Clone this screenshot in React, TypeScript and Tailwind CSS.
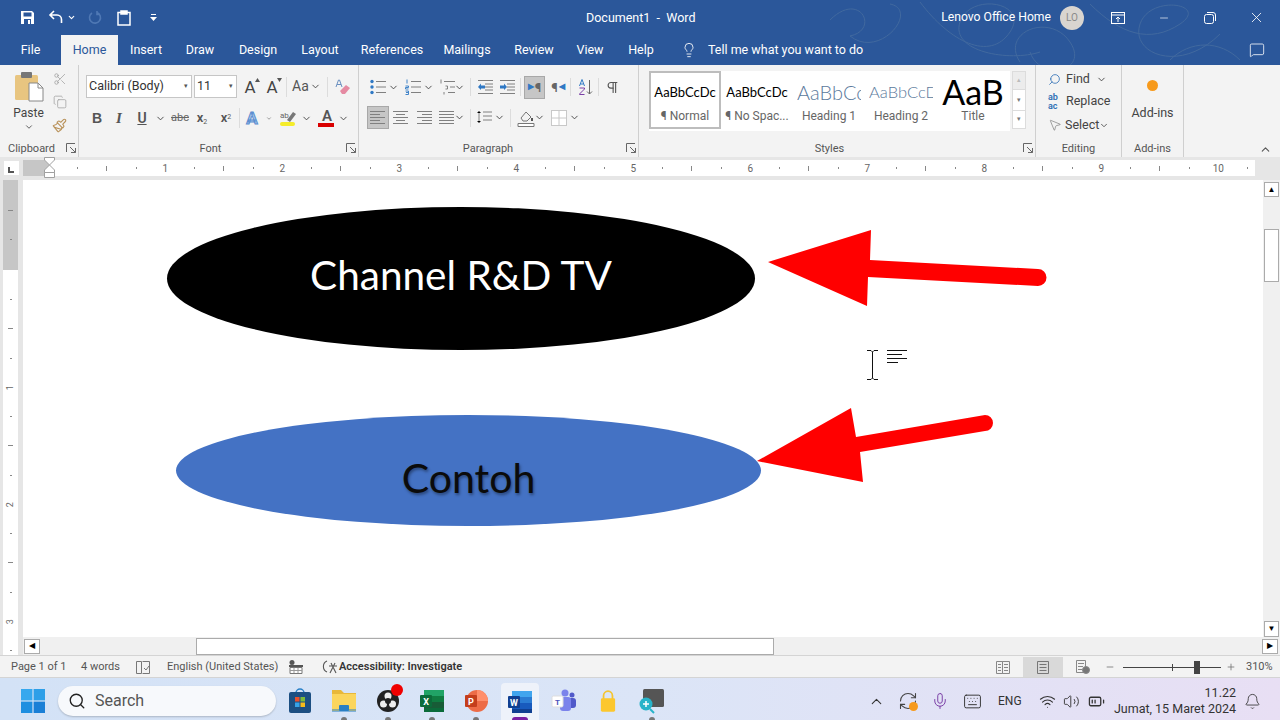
import {
  BatteryMedium,
  Bell,
  ChevronDown,
  ChevronUp,
  Copy,
  Keyboard,
  Lightbulb,
  Mic,
  MessageSquare,
  Minus,
  MousePointer2,
  Paintbrush,
  Pilcrow,
  Plus,
  RefreshCw,
  Scissors,
  Search,
  Volume2,
  Wifi,
  X,
} from "lucide-react";

const uiFont = "font-['Roboto',sans-serif]";

const tabs = [
  { label: "File", w: "w-[61px]" },
  { label: "Home", w: "w-[57px]", active: true },
  { label: "Insert", w: "w-[56px]" },
  { label: "Draw", w: "w-[52px]" },
  { label: "Design", w: "w-[64px]" },
  { label: "Layout", w: "w-[60px]" },
  { label: "References", w: "w-[84px]" },
  { label: "Mailings", w: "w-[66px]" },
  { label: "Review", w: "w-[68px]" },
  { label: "View", w: "w-[44px]" },
  { label: "Help", w: "w-[58px]" },
];

const styleCards = [
  { sample: "AaBbCcDc", label: "¶ Normal", cls: "text-[13px] text-black", active: true },
  { sample: "AaBbCcDc", label: "¶ No Spac...", cls: "text-[13px] text-black" },
  { sample: "AaBbCc", label: "Heading 1", cls: "text-[20px] font-light text-[#5b7a9c]" },
  { sample: "AaBbCcD", label: "Heading 2", cls: "text-[16.500px] font-light text-[#5b7a9c]" },
  { sample: "AaB", label: "Title", cls: "text-[34px] leading-[26px] text-black" },
];

const rulerMarks = ["·", "|", "·", "1", "·", "|", "·", "2", "·", "|", "·", "3", "·", "|", "·", "4", "·", "|", "·", "5", "·", "|", "·", "6", "·", "|", "·", "7", "·", "|", "·", "8", "·", "|", "·", "9", "·", "|", "·", "10", "·", "|"];
const sideMarks = ["·", "|", "·", "1", "·", "|", "·", "2", "·", "|", "·", "3", "·"];

const alignLeft = ["M0 2.500h15", "M0 5.500h10", "M0 8.500h15", "M0 11.500h10", "M0 14.500h15"];
const alignCenter = ["M0 2.500h15", "M3 5.500h9", "M0 8.500h15", "M3 11.500h9", "M0 14.500h15"];
const alignRight = ["M0 2.500h15", "M5 5.500h10", "M0 8.500h15", "M5 11.500h10", "M0 14.500h15"];
const alignJustify = ["M0 2.500h15", "M0 5.500h15", "M0 8.500h15", "M0 11.500h15", "M0 14.500h15"];

function Chev({ className = "w-[14px]" }: { className?: string }) {
  return (
    <span className={`flex items-center justify-center ${className}`}>
      <ChevronDown size={11} strokeWidth={2} className="text-[#444]" />
    </span>
  );
}

function Launcher() {
  return (
    <svg width="10" height="10" viewBox="0 0 10 10" fill="none" stroke="#666" strokeWidth="1">
      <path d="M.5 9V.5H9M9.5 9.5 4 4M9.5 5v4.500H5" />
    </svg>
  );
}

function Sep({ className = "h-[20px]" }: { className?: string }) {
  return <span className={`w-px bg-[#dcdcdc] ${className}`} />;
}

function GroupLabel({ text, launcher, className = "justify-center" }: { text: string; launcher?: boolean; className?: string }) {
  return (
    <div className={`relative mt-auto flex h-[16px] items-center text-[11px] text-[#555] ${className}`}>
      {text}
      {launcher && (
        <span className="absolute -right-[1px] top-[2px]">
          <Launcher />
        </span>
      )}
    </div>
  );
}

function PasteIcon() {
  return (
    <svg width="30" height="32" viewBox="0 0 30 32">
      <rect x="1" y="4" width="23" height="25" rx="1.500" fill="#e8c580" />
      <rect x="7" y="1" width="11" height="6" rx="1" fill="#777" />
      <path d="M15 12h9l5 5v13H15z" fill="#fff" stroke="#888" />
      <path d="M24 12v5h5" fill="none" stroke="#888" />
    </svg>
  );
}

function GrowA({ up }: { up?: boolean }) {
  return (
    <span className="relative flex w-[22px] justify-center text-[17px] leading-[20px] text-[#444]">
      A
      <svg width="5" height="4" viewBox="0 0 5 4" className="absolute right-[1px] top-[1px]">
        <path d={up ? "M0 4 2.500 0 5 4z" : "M0 0h5L2.500 4z"} fill="#555" />
      </svg>
    </span>
  );
}

function Eraser() {
  return (
    <svg width="16" height="16" viewBox="0 0 16 16">
      <path d="M1 8 3.500 1h1L7 8M2 5.500h4" fill="none" stroke="#6a8fc0" />
      <path d="m5 12 6-6 4 3-5 6H7z" fill="#e58aa2" />
    </svg>
  );
}

function Lines({ rows }: { rows: string[] }) {
  return (
    <svg width="16" height="17" viewBox="0 0 16 17" stroke="#808080" strokeWidth="1">
      {rows.map((d) => (
        <path key={d} d={d} />
      ))}
    </svg>
  );
}

function Bullets() {
  return (
    <svg width="16" height="16" viewBox="0 0 16 16">
      <circle cx="2" cy="2.500" r="1.700" fill="#2f78c4" />
      <circle cx="2" cy="8" r="1.700" fill="#2f78c4" />
      <circle cx="2" cy="13.500" r="1.700" fill="#2f78c4" />
      <path d="M6 2.500h10M6 8h10M6 13.500h10" stroke="#808080" />
    </svg>
  );
}

function Numbered() {
  return (
    <svg width="16" height="16" viewBox="0 0 16 16">
      <path d="M2 0.500v4M.500 7h3v1.500h-3v1.500h3M.500 12h3v3.500h-3M1 13.500h2" fill="none" stroke="#2f78c4" strokeWidth=".9" />
      <path d="M6 2.500h10M6 8h10M6 13.500h10" stroke="#808080" />
    </svg>
  );
}

function Multilevel() {
  return (
    <svg width="16" height="16" viewBox="0 0 16 16">
      <path d="M2 .500v4M6.500 7h2v3h-2M5 13v2.500" fill="none" stroke="#777" strokeWidth=".9" />
      <path d="M5 2.500h11M11 8h5M9 13.500h7" stroke="#808080" />
    </svg>
  );
}

function SortIcon() {
  return (
    <svg width="14" height="16" viewBox="0 0 14 16" fill="none">
      <path d="M.500 7 3 .500 5.500 7M1.500 5h3" stroke="#2f78c4" />
      <path d="M.500 9h5v1L.500 15v.500h5" stroke="#7a3fa6" />
      <path d="M10.500 1v14M8 12.500l2.500 2.500 2.500-2.500" stroke="#666" />
    </svg>
  );
}

function IndentIcon({ flip }: { flip?: boolean }) {
  return (
    <svg width="16" height="16" viewBox="0 0 16 16" fill="none">
      <path d="M1 1.500h15M8 5h8M8 8h8M8 11h8M1 14.500h15" stroke="#808080" />
      {flip ? <path d="M1 6.500h4V4.500l3 3.500-3 3V9.500H1z" fill="#2f78c4" /> : <path d="M8 6.500H4V4.500L1 8l3 3V9.500h4z" fill="#2f78c4" />}
    </svg>
  );
}

function DirIcon({ rtl }: { rtl?: boolean }) {
  return (
    <span className="flex items-center text-[13px] font-bold leading-none text-[#666]">
      {rtl ? (
        <>
          ¶<span className="ml-[1px] text-[8px] text-[#2f78c4]">◀</span>
        </>
      ) : (
        <>
          <span className="mr-[1px] text-[8px] text-[#2f78c4]">▶</span>¶
        </>
      )}
    </span>
  );
}

function WinLogo() {
  return (
    <svg width="24" height="24" viewBox="0 0 24 24">
      <rect x="0" y="0" width="11.400" height="11.400" fill="#36a8ee" />
      <rect x="12.600" y="0" width="11.400" height="11.400" fill="#2d9fe8" />
      <rect x="0" y="12.600" width="11.400" height="11.400" fill="#1f8fe0" />
      <rect x="12.600" y="12.600" width="11.400" height="11.400" fill="#1a7fd6" />
    </svg>
  );
}

function StoreIcon() {
  return (
    <svg width="24" height="26" viewBox="0 0 24 26">
      <path d="M8 5a4 4 0 0 1 8 0" fill="none" stroke="#2a80c8" strokeWidth="1.500" />
      <rect x="1" y="4" width="22" height="21" rx="2" fill="#1c4f82" />
      <rect x="7" y="9" width="4.500" height="4.500" fill="#e8502d" />
      <rect x="12.500" y="9" width="4.500" height="4.500" fill="#7dba3a" />
      <rect x="7" y="14.500" width="4.500" height="4.500" fill="#36a3e8" />
      <rect x="12.500" y="14.500" width="4.500" height="4.500" fill="#f5bb1a" />
    </svg>
  );
}

function FolderIcon() {
  return (
    <svg width="26" height="26" viewBox="0 0 26 26">
      <path d="M1 2h9l3 3h12v18H1z" fill="#e8b83a" />
      <rect x="1" y="6" width="24" height="17" fill="#fbd55c" />
      <rect x="8" y="17" width="10" height="6" rx="1" fill="#2a7fc4" />
      <rect x="1" y="21" width="24" height="3" fill="#2a7fc4" opacity=".5" />
    </svg>
  );
}

function ObsIcon() {
  return (
    <span className="relative flex">
      <svg width="24" height="24" viewBox="0 0 24 24">
        <circle cx="12" cy="12" r="11" fill="#222" />
        <circle cx="12" cy="7" r="3.500" fill="#eee" />
        <circle cx="7.500" cy="15" r="3.500" fill="#eee" />
        <circle cx="16.500" cy="15" r="3.500" fill="#eee" />
        <circle cx="12" cy="12" r="3" fill="#222" />
      </svg>
      <span className="absolute -right-[3px] -top-[5px] h-[12px] w-[12px] rounded-full bg-[#f00000]" />
    </span>
  );
}

function OfficeIcon({ kind }: { kind: "x" | "p" | "w" }) {
  if (kind === "p") {
    return (
      <svg width="24" height="24" viewBox="0 0 24 24">
        <circle cx="13" cy="12" r="11" fill="#ed6c47" />
        <path d="M13 1a11 11 0 0 1 11 11H13z" fill="#ff8f6b" />
        <rect x="1" y="6" width="12" height="12" rx="1" fill="#c43e1c" />
        <text x="7" y="15.500" fontSize="9" fontWeight="700" textAnchor="middle" fill="#fff">P</text>
      </svg>
    );
  }
  const colors = kind === "x" ? ["#21a366", "#107c41", "#185c37", "#0b6b3a"] : ["#41a5ee", "#2b7cd3", "#185abd", "#103f91"];
  return (
    <svg width="24" height="24" viewBox="0 0 24 24">
      <rect x="4" y="1" width="20" height="6" fill={colors[0]} />
      <rect x="4" y="7" width="20" height="6" fill={colors[1]} />
      <rect x="4" y="13" width="20" height="6" fill={colors[2]} />
      <rect x="4" y="19" width="20" height="4" fill={colors[3]} />
      <rect x="0" y="6" width="12" height="12" rx="1" fill={colors[3]} />
      <text x="6" y="15.500" fontSize="9" fontWeight="700" textAnchor="middle" fill="#fff">{kind === "x" ? "X" : "W"}</text>
    </svg>
  );
}

function TeamsIcon() {
  return (
    <svg width="26" height="24" viewBox="0 0 26 24">
      <circle cx="14" cy="4" r="3.500" fill="#7b83eb" />
      <circle cx="21" cy="6" r="2.500" fill="#5059c9" />
      <rect x="17" y="9" width="8" height="10" rx="3" fill="#5059c9" />
      <rect x="9" y="8" width="11" height="14" rx="3" fill="#7b83eb" />
      <rect x="1" y="7" width="11" height="11" rx="1.500" fill="#fff" stroke="#ddd" />
      <text x="6.500" y="15.500" fontSize="8" fontWeight="700" textAnchor="middle" fill="#4b53bc">T</text>
    </svg>
  );
}

function LockIcon() {
  return (
    <svg width="16" height="26" viewBox="0 0 18 26">
      <path d="M4 11V7a5 5 0 0 1 10 0v4" fill="none" stroke="#f4c430" strokeWidth="2" />
      <rect x="1" y="10" width="16" height="15" rx="1.500" fill="#fcc72e" />
    </svg>
  );
}

function MagnifierIcon() {
  return (
    <svg width="26" height="26" viewBox="0 0 26 26">
      <rect x="4" y="1" width="21" height="18" rx="1.500" fill="#555" />
      <circle cx="7" cy="16" r="6.500" fill="#27b3c9" />
      <path d="M7 13v6M4 16h6" stroke="#fff" strokeWidth="1.500" />
      <path d="m11 21 4 4" stroke="#27b3c9" strokeWidth="2" />
    </svg>
  );
}

export default function App() {
  return (
    <div className={`flex h-[720px] w-[1280px] flex-col overflow-hidden bg-white ${uiFont}`}>
      {/* title bar + tabs */}
      <div className="relative h-[65px] shrink-0 bg-[#2b579a] text-white">
        <svg className="absolute left-[820px] top-0" width="440" height="65" viewBox="0 0 440 65" fill="none" stroke="#41699f" strokeWidth="1">
          <path d="M10 20C40-10 60 30 30 36 60 60 100 10 70 4M100 2c30 40 70 60 90 30s-40-40-50-10 50 40 80 30M200 62c-20-30 30-50 50-20s-30 40-40 10M270 4c30 30 60 40 90 20s-30-30-40 0 40 50 80 10M350 60c20-20 50-20 70 0" />
        </svg>

        <div className="relative flex h-[35px] items-center">
          <div className="flex items-center pl-[20px] text-white">
            <svg width="15" height="15" viewBox="0 0 15 15">
              <path d="M1 1h11l2 2v11H1z" fill="#fff" />
              <rect x="3.500" y="2.500" width="8" height="4" fill="#2b579a" />
              <rect x="4" y="9" width="7" height="5" fill="#2b579a" />
              <rect x="8" y="10" width="2" height="4" fill="#fff" />
            </svg>
            <svg width="16" height="15" viewBox="0 0 16 15" fill="none" stroke="#fff" strokeWidth="1.600" className="ml-[13px]">
              <path d="M6 1 2 5l4 4M2 5h7a4.500 4.500 0 0 1 4.500 4.500V13" />
            </svg>
            <ChevronDown size={9} strokeWidth={3} className="ml-[3px]" />
            <svg width="16" height="15" viewBox="0 0 16 15" fill="none" stroke="#4f78b4" strokeWidth="1.600" className="ml-[10px]">
              <path d="M6 3a5.500 5.500 0 1 0 5-.500M11 1v3.500h3" />
            </svg>
            <svg width="14" height="16" viewBox="0 0 14 16" fill="none" stroke="#fff" strokeWidth="1.500" className="ml-[15px]">
              <path d="M4 2.500H1v12.500h12V2.500h-3" />
              <rect x="4" y="1" width="6" height="3" fill="#fff" />
            </svg>
            <svg width="7" height="7" viewBox="0 0 7 7" className="ml-[19px]">
              <path d="M1 0h5v1H1zM0 3h7L3.500 7z" fill="#fff" />
            </svg>
          </div>
          <span className="absolute left-[586px] top-[9px] whitespace-pre text-[12.500px] leading-[17px]">Document1  -  Word</span>
          <div className="ml-auto flex items-center">
            <span className="text-[12.200px]">Lenovo Office Home</span>
            <span className="ml-[9px] flex h-[24px] w-[24px] items-center justify-center rounded-full bg-[#d9d5d0] text-[10px] text-[#8a8a8a]">LO</span>
            <svg width="14" height="12" viewBox="0 0 14 12" fill="none" stroke="#fff" className="ml-[27px]">
              <rect x=".500" y=".500" width="13" height="11" />
              <path d="M.500 3h13" />
              <path d="M7 10V5M5 7l2-2 2 2" />
            </svg>
            <Minus size={12} strokeWidth={1.300} className="ml-[33px]" />
            <svg width="12" height="12" viewBox="0 0 12 12" fill="none" stroke="#fff" className="ml-[34px]">
              <rect x=".500" y="2.500" width="9" height="9" rx="2" />
              <path d="M3 .500h6a2.500 2.500 0 0 1 2.500 2.500v6" />
            </svg>
            <X size={17} strokeWidth={1.200} className="ml-[32px] mr-[15px]" />
          </div>
        </div>

        <div className="relative flex h-[30px] items-stretch text-[12.500px]">
          {tabs.map((tab) => (
            <div
              key={tab.label}
              className={`flex items-center justify-center ${tab.w} ${tab.active ? "bg-[#f3f3f3] text-[#2b579a]" : ""}`}
            >
              {tab.label}
            </div>
          ))}
          <Lightbulb size={16} strokeWidth={1.300} className="ml-[11px] self-center" />
          <span className="ml-[11px] self-center">Tell me what you want to do</span>
          <MessageSquare size={16} strokeWidth={1.200} className="ml-auto mr-[15px] self-center" />
        </div>
      </div>

      {/* ribbon */}
      <div className="flex h-[92px] shrink-0 bg-[#f3f3f3] text-[#444]">
        {/* clipboard */}
        <div className="flex w-[79px] shrink-0 flex-col border-r border-[#cfcfcf] pl-[8px] pr-[3px]">
          <div className="flex pt-[6px]">
            <div className="flex w-[41px] flex-col items-center">
              <PasteIcon />
              <span className="mt-[3px] text-[12px] leading-[14px]">Paste</span>
              <ChevronDown size={10} className="mt-[2px] text-[#444]" />
            </div>
            <div className="ml-[3px] flex flex-col items-center gap-[9px] pt-[1px] text-[#9a9a9a]">
              <Scissors size={14} strokeWidth={1.200} />
              <Copy size={14} strokeWidth={1.200} />
              <Paintbrush size={15} strokeWidth={1.800} className="text-[#b9925a]" />
            </div>
          </div>
          <GroupLabel text="Clipboard" launcher className="justify-start" />
        </div>

        {/* font */}
        <div className="flex w-[280px] shrink-0 flex-col border-r border-[#cfcfcf] pl-[7px] pr-[3px]">
          <div className="mt-[10px] flex h-[23px] items-center">
            <div className="flex h-[23px] w-[106px] items-center justify-between border border-[#c6c6c6] bg-white pl-[2px] pr-[3px] text-[12.500px] text-[#333]">
              Calibri (Body)
              <span className="text-[7px] text-[#555]">▾</span>
            </div>
            <div className="ml-[2px] flex h-[23px] w-[43px] items-center justify-between border border-[#c6c6c6] bg-white pl-[2px] pr-[3px] text-[12.500px] text-[#333]">
              11
              <span className="text-[7px] text-[#555]">▾</span>
            </div>
            <span className="ml-[2px]" />
            <GrowA up />
            <GrowA />
            <Sep className="ml-[3px] h-[20px]" />
            <span className="ml-[5px] text-[14px] text-[#555]">Aa</span>
            <Chev className="w-[13px]" />
            <Sep className="ml-[5px] h-[20px]" />
            <span className="ml-[7px]">
              <Eraser />
            </span>
          </div>
          <div className="mt-[9px] flex h-[22px] items-center text-[#555]">
            <span className="w-[22px] text-center font-['Liberation_Sans',sans-serif] text-[14px] font-bold">B</span>
            <span className="w-[22px] text-center font-['Liberation_Serif',serif] text-[15px] font-bold italic">I</span>
            <span className="ml-[1px] w-[22px] text-center text-[14px] font-semibold text-[#555] underline">U</span>
            <Chev />
            <span className="ml-[2px] w-[22px] text-center text-[11px] text-[#666] line-through">abc</span>
            <span className="w-[22px] text-center text-[13px] font-semibold">
              x<sub className="text-[7px] font-normal">2</sub>
            </span>
            <span className="ml-[2px] w-[22px] text-center text-[13px] font-semibold">
              x<sup className="text-[7px] font-normal">2</sup>
            </span>
            <Sep className="ml-[2px] h-[20px]" />
            <span className="w-[24px] text-center text-[17px] font-bold leading-none text-[#a9c6ea] [-webkit-text-stroke:1px_#5b8fd0]">A</span>
            <Chev className="ml-[2px] w-[6px]" />
            <svg width="18" height="18" viewBox="0 0 18 18" className="ml-[8px]">
              <text x="0" y="9" fontSize="8" fill="#666">ab</text>
              <path d="m7 11 6-8 3 2-6 8z" fill="#777" />
              <rect x="0" y="13" width="15" height="4" rx="2" fill="#f5ec2a" />
            </svg>
            <Chev className="ml-[2px] w-[12px]" />
            <span className="relative ml-[6px] flex h-[18px] w-[18px] justify-center text-[15px] font-semibold leading-[15px] text-[#555]">
              A
              <span className="absolute bottom-0 left-0 h-[4px] w-[16px] bg-[#d90000]" />
            </span>
            <Chev className="ml-[1px] w-[12px]" />
          </div>
          <GroupLabel text="Font" launcher className="justify-center pr-[20px]" />
        </div>

        {/* paragraph */}
        <div className="flex w-[280px] shrink-0 flex-col border-r border-[#cfcfcf] pl-[8px] pr-[3px]">
          <div className="mt-[11px] flex h-[22px] items-center pl-[3px] text-[#777]">
            <Bullets />
            <Chev className="ml-[2px]" />
            <span className="ml-[6px]">
              <Numbered />
            </span>
            <Chev className="ml-[2px]" />
            <span className="ml-[5px]">
              <Multilevel />
            </span>
            <Chev className="-ml-[1px]" />
            <Sep className="ml-[5px] h-[18px]" />
            <span className="ml-[6px]">
              <IndentIcon />
            </span>
            <span className="ml-[6px]">
              <IndentIcon flip />
            </span>
            <Sep className="ml-[5px] h-[18px]" />
            <span className="ml-[3px] flex h-[23px] w-[21px] items-center justify-center border border-[#a8a8a8] bg-[#c6c6c6]">
              <DirIcon />
            </span>
            <span className="ml-[5px] flex w-[16px] justify-center">
              <DirIcon rtl />
            </span>
            <Sep className="ml-[4px] h-[18px]" />
            <span className="ml-[8px] flex w-[14px] items-center">
              <SortIcon />
            </span>
            <Sep className="ml-[5px] h-[18px]" />
            <Pilcrow size={15} strokeWidth={1.800} className="ml-[6px] text-[#555]" />
          </div>
          <div className="mt-[8px] flex h-[23px] items-center text-[#777]">
            <span className="flex h-[23px] w-[22px] items-center justify-center border border-[#a8a8a8] bg-[#c6c6c6]">
              <Lines rows={alignLeft} />
            </span>
            <span className="ml-[4px]">
              <Lines rows={alignCenter} />
            </span>
            <span className="ml-[8px]">
              <Lines rows={alignRight} />
            </span>
            <span className="ml-[6px]">
              <Lines rows={alignJustify} />
            </span>
            <Chev className="-ml-[1px]" />
            <Sep className="ml-[5px] h-[18px]" />
            <span className="ml-[5px]">
              <Lines rows={["M7 3h9", "M7 7h9", "M7 11h9", "M3 2v12", "M1 4l2-2 2 2", "M1 12l2 2 2-2"]} />
            </span>
            <Chev />
            <Sep className="ml-[4px] h-[18px]" />
            <svg width="18" height="18" viewBox="0 0 18 18" fill="none" stroke="#777" className="ml-[6px]">
              <path d="m4 9 5-6 5 5-4 4H6z" />
              <path d="M15 9v3" stroke="#555" strokeWidth="2" />
              <path d="M1 14.500h16v3H1z" fill="#fff" />
            </svg>
            <Chev className="-ml-[1px]" />
            <svg width="16" height="16" viewBox="0 0 16 16" fill="#fff" stroke="#c8c8c8" className="ml-[6px]">
              <rect x=".500" y=".500" width="15" height="15" />
              <path d="M8 0v16M0 8h16" />
            </svg>
            <Chev className="ml-[2px]" />
          </div>
          <GroupLabel text="Paragraph" launcher className="justify-center pr-[26px]" />
        </div>

        {/* styles */}
        <div className="flex w-[397px] shrink-0 flex-col border-r border-[#cfcfcf] pl-[10px] pr-[3px]">
          <div className="mt-[6px] flex h-[60px]">
            <div className="flex w-[361px] bg-white">
              {styleCards.map((card) => (
                <div
                  key={card.label}
                  className={`flex h-[58px] w-[72px] shrink-0 flex-col items-center overflow-hidden ${card.active ? "border-2 border-[#bdbdbd]" : ""}`}
                >
                  <span className={`block h-[28px] w-[64px] overflow-hidden whitespace-nowrap text-center font-['Lato',sans-serif] leading-[28px] ${card.active ? "mt-[5px]" : "mt-[7px]"} ${card.cls}`}>{card.sample}</span>
                  <span className="mt-[2px] whitespace-nowrap text-[12px] leading-[16px] text-[#666]">{card.label}</span>
                </div>
              ))}
            </div>
            <div className="ml-[2px] flex w-[14px] flex-col text-[#777]">
              <span className="flex h-[19px] items-center justify-center border border-[#dcdcdc] bg-[#ececec] text-[7px] text-[#bbb]">▴</span>
              <span className="flex h-[20px] items-center justify-center border-x border-[#dcdcdc] bg-white text-[7px]">▾</span>
              <span className="flex h-[19px] items-center justify-center border border-[#dcdcdc] bg-white text-[7px]">▾</span>
            </div>
          </div>
          <GroupLabel text="Styles" launcher className="justify-center pr-[22px]" />
        </div>

        {/* editing */}
        <div className="flex w-[86px] shrink-0 flex-col border-r border-[#cfcfcf] pl-[12px]">
          <div className="mt-[3px] flex h-[22px] items-center text-[12.500px]">
            <Search size={13} strokeWidth={1.500} className="-scale-x-100 text-[#2f6fb5]" />
            <span className="ml-[5px]">Find</span>
            <Chev className="ml-[5px] w-[14px]" />
          </div>
          <div className="flex h-[23px] items-center text-[12.500px]">
            <span className="w-[15px] text-[9px] font-semibold leading-[9px] text-[#2f6fb5]">ab<br />ac</span>
            <span className="ml-[3px]">Replace</span>
          </div>
          <div className="flex h-[24px] items-center text-[12.500px]">
            <MousePointer2 size={14} strokeWidth={1} className="text-[#666]" />
            <span className="ml-[3px]">Select</span>
            <Chev className="w-[10px]" />
          </div>
          <GroupLabel text="Editing" className="justify-center pr-[12px]" />
        </div>

        {/* add-ins */}
        <div className="flex w-[62px] shrink-0 flex-col border-r border-[#cfcfcf]">
          <span className="mx-auto mt-[15px] h-[11px] w-[11px] rounded-full bg-[#f79a1c]" />
          <span className="mt-[14px] text-center text-[12.500px] leading-[16px]">Add-ins</span>
          <GroupLabel text="Add-ins" />
        </div>

        <div className="flex flex-1 items-end justify-end pb-[1px] pr-[8px]">
          <ChevronUp size={13} className="text-[#555]" />
        </div>
      </div>

      {/* horizontal ruler */}
      <div className="relative flex h-[23px] shrink-0 bg-[#e6e6e6] pt-[3px]">
        <span className="absolute left-[4px] top-[4px] flex h-[14px] w-[15px] items-end justify-start bg-white pb-[2px] pl-[4px]">
          <span className="h-[6px] w-[6px] border-b-2 border-l-2 border-[#555]" />
        </span>
        <div className="relative ml-[23px] flex h-[16px] w-[1232px] items-center overflow-hidden bg-white pl-[40px] text-[10px] text-[#666]">
          <span className="absolute left-0 top-0 h-[16px] w-[26px] bg-[#c6c6c6]" />
          {rulerMarks.map((mark, i) => (
            <span key={i} className="flex w-[29.250px] shrink-0 justify-center">
              {mark === "|" ? <span className="h-[5px] w-px bg-[#888]" /> : mark === "·" ? <span className="h-[2px] w-px bg-[#888]" /> : mark}
            </span>
          ))}
        </div>
        <svg className="absolute left-[44px] top-0" width="11" height="22" viewBox="0 0 11 22" fill="#fff" stroke="#a0a0a0">
          <path d="M.5.500h10V3L5.500 8 .500 3zM5.500 8l5 5v2.500H.500V13zM.500 15.500h10v5H.500z" />
        </svg>
      </div>

      {/* document area */}
      <div className="flex min-h-0 flex-1">
        <div className="relative flex w-[23px] shrink-0 flex-col items-center overflow-hidden bg-[#e6e6e6] text-[9px] text-[#666]">
          <div className="absolute left-[3px] top-0 flex h-[90px] w-[15px] flex-col items-center gap-[28px] bg-[#c6c6c6] pt-[30px]">
            <span className="h-px w-[5px] bg-[#888]" />
            <span className="h-px w-[2px] bg-[#888]" />
          </div>
          <div className="absolute left-[3px] top-[90px] flex h-[386px] w-[15px] flex-col items-center overflow-hidden bg-white pt-[15px]">
            {sideMarks.map((mark, i) => (
              <span key={i} className="flex h-[29.250px] shrink-0 items-center justify-center">
                {mark === "|" ? <span className="h-px w-[5px] bg-[#888]" /> : mark === "·" ? <span className="h-px w-[2px] bg-[#888]" /> : <span className="-rotate-90">{mark}</span>}
              </span>
            ))}
          </div>
        </div>

        <div className="flex min-w-0 flex-1 flex-col">
          <div className="flex min-h-0 flex-1">
            <div className="relative flex-1 overflow-hidden bg-white">
              <div className="absolute left-[144px] top-[27px] flex h-[143px] w-[588px] items-center justify-center rounded-[50%] bg-black pb-[7px] font-['Lato',sans-serif] text-[40.500px] text-white">
                Channel R&amp;D TV
              </div>
              <div className="absolute left-[153px] top-[235px] flex h-[111px] w-[585px] items-center justify-center rounded-[50%] bg-[#4472c4] pt-[15px] font-['Lato',sans-serif] text-[41px] text-[#0b0b0b] [text-shadow:1px_2px_3px_rgba(0,0,0,0.4)]">
                Contoh
              </div>
              <svg className="absolute inset-0" width="1240" height="457" viewBox="23 180 1240 457" fill="#ff0000">
                <path d="M768 262 871 230 870 260 1038 269a8.500 8.500 0 0 1 0 17L868 277 867 306z" />
                <path d="M757 461 851 408 856 437 985 415a8 8 0 0 1 0 16L860 452 863 482z" />
                <g fill="none" stroke="#111" strokeWidth="1">
                  <path d="M867 350.500h4l1.500 1.500 1.500-1.500h4M872.500 352v26M867 379.500h4l1.500-1.500 1.500 1.500h4" />
                  <path d="M887 350.500h20M887 354.500h15M887 358.500h20M887 362.500h11" />
                </g>
              </svg>
            </div>
            <div className="flex w-[17px] shrink-0 flex-col items-center bg-[#f0f0f0] pt-[2px]">
              <span className="flex h-[15px] w-[15px] items-center justify-center border border-[#ababab] bg-white text-[8px] text-black">▲</span>
              <span className="mt-[32px] h-[53px] w-[15px] border border-[#ababab] bg-white" />
              <span className="mt-auto flex h-[16px] w-[15px] items-center justify-center border border-[#ababab] bg-white text-[8px] text-black">▼</span>
            </div>
          </div>
          <div className="flex h-[18px] shrink-0 items-center bg-[#f0f0f0] pl-[1px] pr-[2px]">
            <span className="flex h-[15px] w-[16px] items-center justify-center border border-[#ababab] bg-white text-[8px] text-black">◀</span>
            <span className="ml-[156px] h-[17px] w-[578px] border border-[#ababab] bg-white" />
            <span className="ml-auto flex h-[15px] w-[16px] items-center justify-center border border-[#ababab] bg-white text-[8px] text-black">▶</span>
          </div>
        </div>
      </div>

      {/* status bar */}
      <div className="flex h-[23px] shrink-0 items-center border-y border-[#d4d4d4] bg-[#f3f3f3] pl-[11px] pt-[1px] text-[11px] text-[#555]">
        <span className="w-[50px] whitespace-nowrap">Page 1 of 1</span>
        <span className="ml-[20px] w-[36px] whitespace-nowrap">4 words</span>
        <svg width="14" height="13" viewBox="0 0 14 13" fill="none" stroke="#777" className="ml-[19px]">
          <path d="M.500.500h5v12h-5zM6.500.500h7v12h-7M8 7l2 2 3-4" />
        </svg>
        <span className="ml-[17px] w-[105px] whitespace-nowrap">English (United States)</span>
        <svg width="14" height="14" viewBox="0 0 14 14" className="ml-[17px]">
          <circle cx="3" cy="2.500" r="2.500" fill="#555" />
          <rect x="0" y="5" width="14" height="2" fill="#555" />
          <path d="M1 7.500h12v6H1z" fill="#fff" stroke="#777" />
          <path d="M5 8v5M9 8v5M1 10.500h12" stroke="#999" />
        </svg>
        <svg width="17" height="15" viewBox="0 0 17 15" fill="none" stroke="#555" strokeWidth="1.100" className="ml-[18px]">
          <path d="M6 1a6 6 0 0 0 0 11M8 6h8M10 3l5 10M14 3 9 13" />
        </svg>
        <span className="ml-[1px] font-semibold text-[#333]">Accessibility: Investigate</span>

        <div className="ml-auto flex h-full items-center text-[#777]">
          <svg width="14" height="13" viewBox="0 0 14 13" fill="none" stroke="#888">
            <path d="M.500.500h6v12h-6zM6.500.500h7v12h-7zM2 3.500h3M2 6.500h3M2 9.500h3M8 3.500h4M8 6.500h4M8 9.500h4" />
          </svg>
          <span className="ml-[13px] flex h-full w-[40px] items-center justify-center bg-[#d9d9d9]">
            <svg width="12" height="13" viewBox="0 0 12 13" fill="none" stroke="#777">
              <path d="M.500.500h11v12H.500zM2.500 3.500h7M2.500 6.500h7M2.500 9.500h7" />
            </svg>
          </span>
          <svg width="14" height="14" viewBox="0 0 14 14" fill="none" stroke="#888" className="ml-[13px]">
            <path d="M.500.500h9v12h-9zM2 3.500h6M2 6.500h5M2 9.500h4" />
            <circle cx="10" cy="10" r="3.500" fill="#777" />
          </svg>
          <Minus size={10} className="ml-[15px]" />
          <div className="relative ml-[8px] h-px w-[98px] bg-[#444]">
            <span className="absolute left-[49px] top-[-3px] h-[7px] w-px bg-[#444]" />
            <span className="absolute left-[71px] top-[-6px] h-[13px] w-[6px] bg-[#444]" />
          </div>
          <Plus size={10} className="ml-[5px]" />
          <span className="ml-[10px] w-[28px] mr-[6px] text-[#555]">310%</span>
        </div>
      </div>

      {/* taskbar */}
      <div className="flex h-[42px] shrink-0 items-center bg-gradient-to-r from-[#d3e2f6] via-[#dbe5f7] to-[#e8dff4] pt-[4px] text-[#222]">
        <span className="ml-[21px]">
          <WinLogo />
        </span>
        <div className="ml-[13px] flex h-[30px] w-[218px] items-center rounded-full bg-[#f7f9fc] pl-[10px] text-[16px] text-[#555] shadow-[0_1px_2px_rgba(0,0,0,0.2)]">
          <Search size={18} strokeWidth={1.800} className="text-[#222]" />
          <span className="ml-[9px]">Search</span>
        </div>
        <div className="ml-[2px] flex h-full items-stretch">
          {[
            { icon: <StoreIcon /> },
            { icon: <FolderIcon />, dot: true },
            { icon: <ObsIcon />, dot: true },
            { icon: <OfficeIcon kind="x" />, dot: true },
            { icon: <OfficeIcon kind="p" />, dot: true },
            { icon: <OfficeIcon kind="w" />, active: true },
            { icon: <TeamsIcon /> },
            { icon: <LockIcon /> },
            { icon: <MagnifierIcon />, dot: true },
          ].map((app, i) => (
            <span key={i} className={`relative flex items-center justify-center ${app.active ? "mx-[3px] mt-[1px] w-[38px] rounded-t bg-[#eef2fa]" : "w-[44px]"}`}>
              {app.icon}
              {app.dot && <span className="absolute bottom-0 left-1/2 h-[3px] w-[6px] -translate-x-1/2 rounded-t-full bg-[#777]" />}
              {app.active && <span className="absolute bottom-0 left-1/2 h-[3px] w-[16px] -translate-x-1/2 rounded-t-full bg-[#7a1fa2]" />}
            </span>
          ))}
        </div>
        <div className="ml-auto flex items-center text-[#333]">
          <ChevronUp size={17} strokeWidth={1.500} />
          <span className="relative ml-[13px] flex">
            <RefreshCw size={20} strokeWidth={1.300} className="text-[#444]" />
            <span className="absolute bottom-0 right-0 h-[9px] w-[9px] rounded-full bg-[#f79a1c]" />
          </span>
          <Mic size={18} strokeWidth={1.300} className="ml-[13px] text-[#7a3fa6]" />
          <Keyboard size={19} strokeWidth={1.200} className="ml-[14px]" />
          <span className="ml-[16px] w-[24px] text-[12px]">ENG</span>
          <Wifi size={17} strokeWidth={1.500} className="ml-[17px]" />
          <Volume2 size={17} strokeWidth={1.300} className="ml-[7px]" />
          <BatteryMedium size={17} strokeWidth={1.800} className="ml-[8px]" />
          <div className="ml-[15px] flex w-[116px] flex-col items-end whitespace-nowrap text-[12.500px] leading-[16px]">
            <span>11.22</span>
            <span>Jumat, 15 Maret 2024</span>
          </div>
          <Bell size={17} strokeWidth={1.200} className="ml-[8px] mr-[19px]" />
        </div>
      </div>
    </div>
  );
}
